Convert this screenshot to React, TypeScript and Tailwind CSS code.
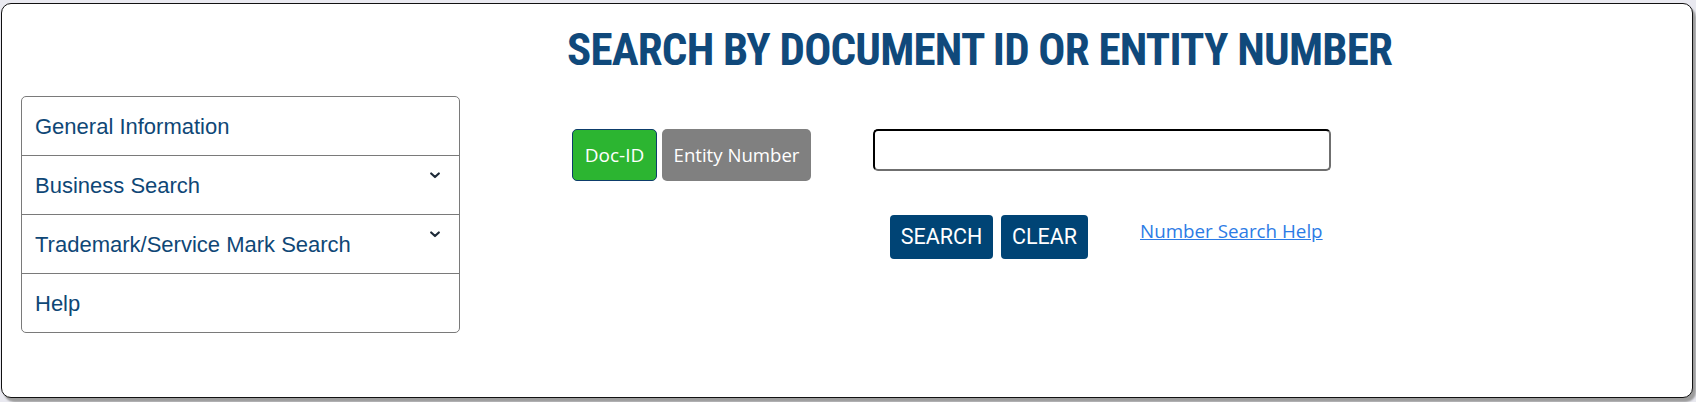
import React from "react";

const Chevron = () => (
  <svg width="10" height="7" viewBox="0 0 10 7" className="absolute right-[19px] top-[16px]">
    <path d="M1.2 1.5 L5 5 L8.8 1.5" fill="none" stroke="#1e2a38" strokeWidth="2.2" strokeLinecap="round" strokeLinejoin="round" />
  </svg>
);

const items: { label: string; chevron: boolean }[] = [
  { label: "General Information", chevron: false },
  { label: "Business Search", chevron: true },
  { label: "Trademark/Service Mark Search", chevron: true },
  { label: "Help", chevron: false },
];

export default function App() {
  return (
    <div className="w-[1696px] h-[402px] bg-[#e9e9f0] pt-[3px] pl-[1px] overflow-hidden">
      <div className="w-[1692px] h-[395px] bg-white border border-[#111] rounded-[10px] shadow-[3px_4px_2px_#9c9c9c] flex">
        {/* Sidebar */}
        <div className="ml-[19px] mt-[92px] w-[439px] self-start border border-[#7a7a7a] rounded-[5px] overflow-hidden">
          {items.map((it, i) => (
            <div
              key={it.label}
              className={
                "relative h-[58px] flex items-center pl-[13px] text-[22px] text-[#0f4776] font-['Liberation_Sans',Arial,sans-serif] " +
                (i < items.length - 1 ? "border-b border-[#7a7a7a] h-[59px]" : "")
              }
            >
              <span>{it.label}</span>
              {it.chevron && <Chevron />}
            </div>
          ))}
        </div>

        {/* Main */}
        <div className="w-[1039px] pt-[23px]">
          <h1 className="text-center text-[45px] leading-[45px] font-bold text-[#10497b] font-['Roboto_Condensed','Roboto',sans-serif] [font-stretch:condensed] tracking-[-0.8px]">
            SEARCH BY DOCUMENT ID OR ENTITY NUMBER
          </h1>

          <div className="mt-[57px] flex items-start pl-[112px]">
            <button className="h-[52px] w-[85px] rounded-[5px] bg-[#2cb531] border border-[#0d3d6b] text-white text-[19px] font-['Open_Sans',sans-serif]">
              Doc-ID
            </button>
            <button className="ml-[5px] h-[52px] w-[149px] rounded-[5px] bg-[#808080] text-white text-[18.6px] font-['Open_Sans',sans-serif]">
              Entity Number
            </button>
            <input
              type="text"
              className="ml-[62px] h-[42px] w-[458px] rounded-[5px] border-2 border-t-black border-l-black border-r-[#6f6f6f] border-b-[#6f6f6f] bg-white outline-none"
            />
          </div>

          <div className="mt-[34px] flex items-start pl-[430px]">
            <button className="h-[44px] w-[103px] rounded-[4px] bg-[#004475] text-white text-[21.5px] font-['Roboto',sans-serif]">
              SEARCH
            </button>
            <button className="ml-[8px] h-[44px] w-[87px] rounded-[4px] bg-[#004475] text-white text-[21.5px] font-['Roboto',sans-serif]">
              CLEAR
            </button>
            <a
              href="#"
              className="ml-[52px] mt-[7px] leading-[18px] text-[18.8px] text-[#2c7be5] underline font-['Open_Sans',sans-serif]"
            >
              Number Search Help
            </a>
          </div>
        </div>
      </div>
    </div>
  );
}
